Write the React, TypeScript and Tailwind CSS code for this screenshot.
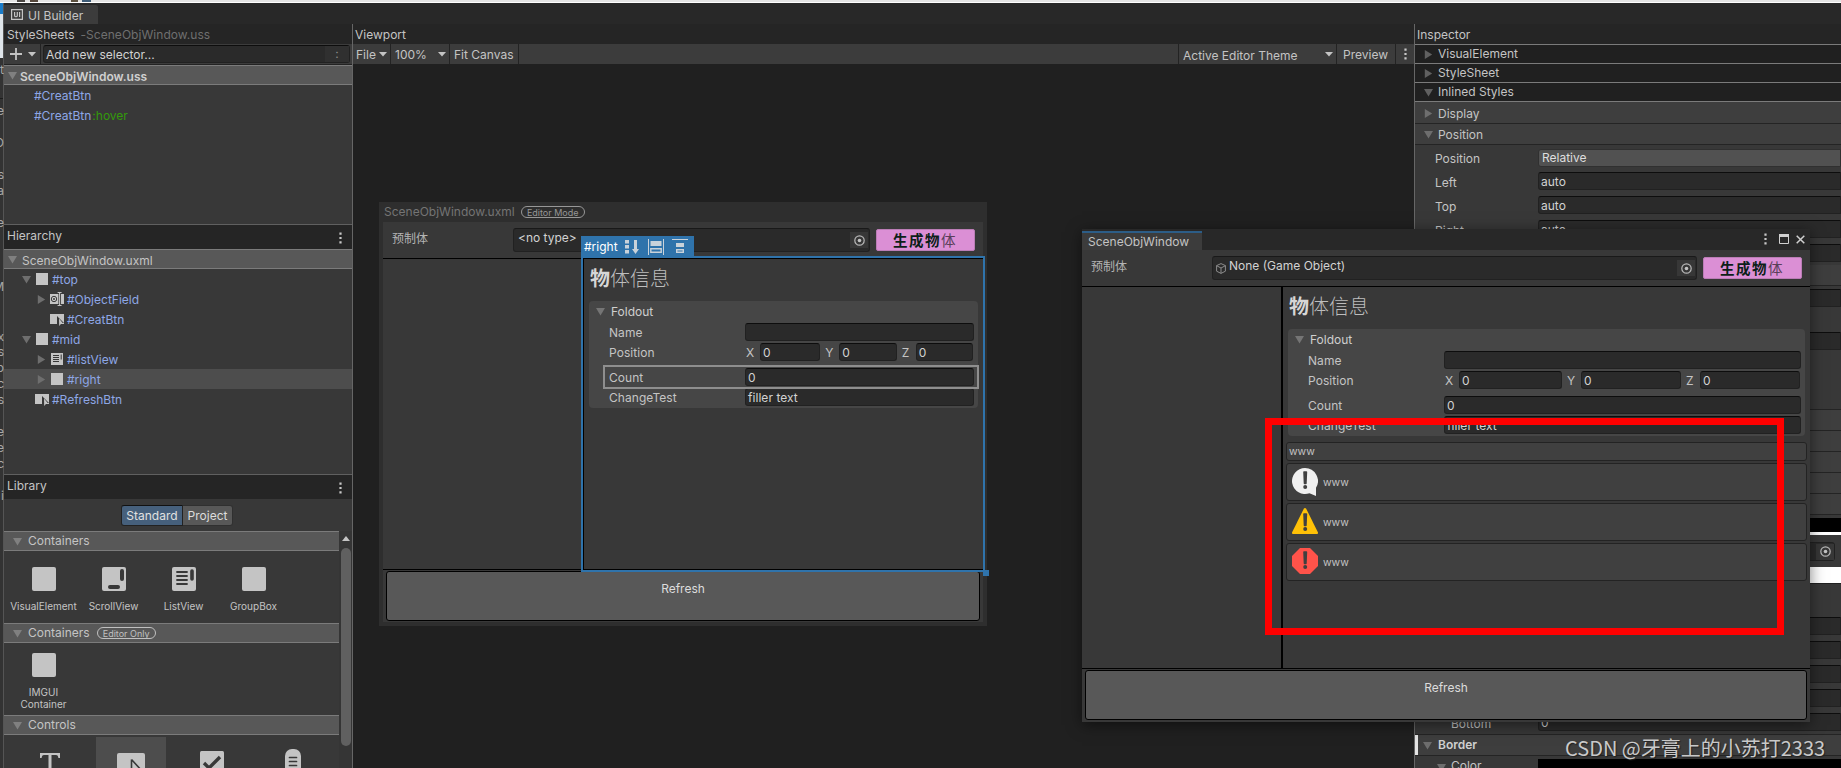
import React from "react";

const FIELD =
  "flex items-center h-[18px] bg-[#2a2a2a] border border-[#212121] border-t-[#0d0d0d] rounded-[3px] px-[2px] pt-px text-[#d2d2d2]";

function Tri({ open = false, color = "#6e6e6e" }: { open?: boolean; color?: string }) {
  return (
    <svg width="9" height="9" viewBox="0 0 9 9" className="shrink-0">
      <path d={open ? "M0 1h9L4.5 8.6z" : "M.8 0v9L8.200 4.5z"} fill={color} />
    </svg>
  );
}

function Caret() {
  return (
    <svg width="8" height="5" viewBox="0 0 8 5" className="shrink-0">
      <path d="M0 0h8L4 4.6z" fill="#c4c4c4" />
    </svg>
  );
}

function Kebab() {
  return (
    <svg width="3" height="12" viewBox="0 0 3 12" className="shrink-0">
      <path d="M.4 .5h2.2v2.2H.4zM.4 4.9h2.2v2.2H.4zM.4 9.3h2.2v2.2H.4z" fill="#c8c8c8" />
    </svg>
  );
}

function Target() {
  return (
    <span className="flex h-4 w-[18px] shrink-0 items-center justify-center bg-[#373737]">
      <svg width="11" height="11" viewBox="0 0 11 11">
        <circle cx="5.5" cy="5.5" r="4.7" fill="none" stroke="#b8b8b8" strokeWidth="1.2" />
        <circle cx="5.5" cy="5.5" r="1.8" fill="#c4c4c4" />
      </svg>
    </span>
  );
}

type NodeKind = "box" | "object" | "button" | "list";

function NodeIcon({ kind }: { kind: NodeKind }) {
  if (kind === "box")
    return (
      <svg width="14" height="14" viewBox="0 0 14 14">
        <path d="M1 1h12v12H1z" fill="#c4c4c4" />
      </svg>
    );
  if (kind === "list")
    return (
      <svg width="14" height="14" viewBox="0 0 14 14">
        <path d="M1 1h12v12H1z" fill="#c4c4c4" />
        <path d="M3 3.5h6M3 5.5h6M3 7.5h6M3 9.5h6M11.2 2.5v5" stroke="#383838" fill="none" />
      </svg>
    );
  if (kind === "button")
    return (
      <svg width="14" height="14" viewBox="0 0 14 14">
        <path d="M0 2h14v10H0z" fill="#c4c4c4" />
        <path d="M7 4l7 7h-3l-2 3.5H7z" fill="#383838" />
        <path d="M9 6.5l4.5 5.5h-2.6L9.2 14z" fill="#c4c4c4" />
      </svg>
    );
  return (
    <svg width="14" height="14" viewBox="0 0 14 14">
      <path d="M0 2h8.4v10H0zM11 2h3v10h-3z" fill="#c4c4c4" />
      <circle cx="4" cy="7" r="2.7" fill="none" stroke="#383838" />
      <circle cx="4" cy="7" r="1" fill="#383838" />
      <path d="M7.6 .5h4M7.6 13.5h4M9.6 .5v13" stroke="#c4c4c4" strokeWidth="1.1" fill="none" />
    </svg>
  );
}

function Badge({ children, className = "" }: { children: React.ReactNode; className?: string }) {
  return (
    <span className={"flex h-3 items-center justify-center rounded-full border text-[9px] leading-none " + className}>
      {children}
    </span>
  );
}

function PaneHeader({ title }: { title: string }) {
  return (
    <div className="flex h-[25px] shrink-0 justify-between border-t border-[#606060] bg-[#252525] pl-[3px] pr-[10px]">
      <span className="leading-[21px]">{title}</span>
      <span className="mt-[7px]">
        <Kebab />
      </span>
    </div>
  );
}

const TREE: { depth: string; arrow?: "open" | "closed"; kind: NodeKind; name: string; active?: boolean }[] = [
  { depth: "pl-[18px]", arrow: "open", kind: "box", name: "#top" },
  { depth: "pl-[33px]", arrow: "closed", kind: "object", name: "#ObjectField" },
  { depth: "pl-[33px]", kind: "button", name: "#CreatBtn" },
  { depth: "pl-[18px]", arrow: "open", kind: "box", name: "#mid" },
  { depth: "pl-[33px]", arrow: "closed", kind: "list", name: "#listView" },
  { depth: "pl-[33px]", arrow: "closed", kind: "box", name: "#right", active: true },
  { depth: "pl-[18px]", kind: "button", name: "#RefreshBtn" },
];

function LibHeader({ title, badge }: { title: string; badge?: string }) {
  return (
    <div className="flex h-5 shrink-0 items-center border-y border-[#7b7b7b] bg-[#585858] pl-[9px]">
      <Tri open color="#808080" />
      <span className="ml-[6px]">{title}</span>
      {badge && <Badge className="ml-[7px] w-[59px] border-[#c0c0c0] text-[#c0c0c0]">{badge}</Badge>}
    </div>
  );
}

function LibIcon({ kind }: { kind: "plain" | "scroll" | "list" }) {
  return (
    <svg width="24" height="24" viewBox="0 0 24 24">
      <rect width="24" height="24" rx="2" fill="#c4c4c4" />
      {kind === "scroll" && (
        <path d="M20 4v8M8 20h8" stroke="#383838" strokeWidth="4" strokeLinecap="round" fill="none" />
      )}
      {kind === "list" && (
        <>
          <path d="M5 5h10M5 9h10M5 13h10M5 17h10" stroke="#383838" strokeWidth="1.8" strokeLinecap="round" />
          <path d="M20 4v8" stroke="#383838" strokeWidth="3.6" strokeLinecap="round" />
        </>
      )}
    </svg>
  );
}

function LibItem({ kind, label }: { kind: "plain" | "scroll" | "list"; label: string }) {
  return (
    <div className="flex w-[70px] flex-col items-center text-center text-[10px] leading-3">
      <LibIcon kind={kind} />
      <span className="mr-px mt-[9px] whitespace-pre">{label}</span>
    </div>
  );
}

function LeftPanels() {
  return (
    <div className="flex w-[348px] shrink-0 flex-col bg-[#383838]">
      <div className="h-5 shrink-0 bg-[#252525] pl-[3px] leading-[21px]">
        StyleSheets<span className="ml-[6px] tracking-[0.04px] text-[#6f6f6f]">-SceneObjWindow.uss</span>
      </div>
      <div className="flex h-[21px] shrink-0 items-center border-b border-[#232323] bg-[#3c3c3c]">
        <div className="flex h-5 w-[37px] items-center gap-[6px] border-r border-[#232323] pl-[6px]">
          <svg width="12" height="12" viewBox="0 0 12 12">
            <path d="M6 0v12M0 6h12" stroke="#c4c4c4" strokeWidth="1.8" />
          </svg>
          <Caret />
        </div>
        <div className="ml-[2px] flex h-[18px] w-[307px] items-center justify-between rounded-[3px] border border-[#212121] border-t-[#0d0d0d] bg-[#2a2a2a] pl-[2px] text-[#d2d2d2]">
          <span className="pt-[2px]">Add new selector...</span>
          <span className="flex h-4 w-6 items-center justify-center bg-[#303030] text-[#8a8a8a]">:</span>
        </div>
      </div>
      <div className="flex h-5 shrink-0 items-center border-y border-[#7b7b7b] bg-[#585858] pl-1">
        <Tri open color="#808080" />
        <span className="ml-[3px] pt-[3px] font-semibold text-[#d0d0d0]">SceneObjWindow.uss</span>
      </div>
      <div className="h-5 pl-[30px] leading-[22px] text-[#8ea7e6]">#CreatBtn</div>
      <div className="h-5 pl-[30px] leading-[22px] text-[#8ea7e6]">
        #CreatBtn<span className="ml-px text-[#339a0a]">:hover</span>
      </div>
      <div className="h-[99px] shrink-0" />

      <PaneHeader title="Hierarchy" />
      <div className="flex h-5 shrink-0 items-center border-y border-[#7b7b7b] bg-[#585858] pl-1">
        <Tri open color="#808080" />
        <span className="ml-[5px] pt-[3px]">SceneObjWindow.uxml</span>
      </div>
      {TREE.map((n) => (
        <div
          key={n.name}
          className={"flex h-5 shrink-0 items-center text-[#8ea7e6] " + n.depth + (n.active ? " bg-[#4d4d4d]" : "")}
        >
          <span className="w-[13px]">{n.arrow && <Tri open={n.arrow === "open"} />}</span>
          <NodeIcon kind={n.kind} />
          <span className="ml-[3px] pt-px">{n.name}</span>
        </div>
      ))}
      <div className="h-[65px] shrink-0" />

      <PaneHeader title="Library" />
      <div className="flex h-8 shrink-0 justify-center pr-[2px] pt-[6px]">
        <div className="flex h-[21px] w-[62px] items-center justify-center rounded-l-[3px] border border-[#222] border-t-[#111] bg-[#46607c] pt-px text-[#e0e0e0]">
          Standard
        </div>
        <div className="flex h-[21px] w-[50px] items-center justify-center rounded-r-[3px] border border-l-0 border-[#303030] bg-[#585858] pt-px text-[#dcdcdc]">
          Project
        </div>
      </div>
      <div className="flex min-h-0 flex-1">
        <div className="flex w-[335px] flex-col overflow-hidden">
          <LibHeader title="Containers" />
          <div className="flex h-[72px] shrink-0 pl-[5px] pt-4">
            <LibItem kind="plain" label="VisualElement" />
            <LibItem kind="scroll" label="ScrollView" />
            <LibItem kind="list" label="ListView" />
            <LibItem kind="plain" label="GroupBox" />
          </div>
          <LibHeader title="Containers" badge="Editor Only" />
          <div className="flex h-[72px] shrink-0 pl-[5px] pt-[10px]">
            <LibItem kind="plain" label={"IMGUI\nContainer"} />
          </div>
          <LibHeader title="Controls" />
          <div className="flex h-[60px] shrink-0 pl-[11px] pt-[2px]">
            <div className="flex w-[70px] shrink-0 justify-center pt-4">
              <svg width="20" height="20" viewBox="0 0 20 20">
                <path d="M0 0h20v5h-1.600c-.3-2-.8-3-2.400-3H11.500v18h-3V2H4C2.400 2 1.900 3 1.600 5H0z" fill="#c4c4c4" />
              </svg>
            </div>
            <div className="ml-[11px] flex h-full w-[70px] shrink-0 justify-center bg-[#4d4d4d] pt-4">
              <svg width="28" height="24" viewBox="0 0 28 24">
                <rect width="28" height="24" rx="2" fill="#c4c4c4" />
                <path d="M14.500 6.500v14M14.500 6.500l11 12" stroke="#383838" strokeWidth="1.600" fill="none" />
              </svg>
            </div>
            <div className="flex w-[92px] shrink-0 justify-center pt-[14px]">
              <svg width="24" height="24" viewBox="0 0 24 24">
                <rect width="24" height="24" rx="1.500" fill="#c4c4c4" />
                <path d="M4 12l5 5L20 6" stroke="#383838" strokeWidth="3.400" fill="none" />
              </svg>
            </div>
            <div className="flex w-[70px] shrink-0 justify-center pt-3">
              <svg width="16" height="30" viewBox="0 0 16 30">
                <rect width="16" height="30" rx="7" fill="#c4c4c4" />
                <path d="M4.500 8.500h7M4.500 12.500h7M4.500 16.500h7" stroke="#383838" strokeWidth="1.700" strokeLinecap="round" />
              </svg>
            </div>
          </div>
        </div>
        <div className="flex w-[13px] flex-col items-center bg-[#353535] pl-px">
          <svg width="8" height="5" viewBox="0 0 8 5" className="mt-[5px] shrink-0">
            <path d="M0 5h8L4 0z" fill="#c4c4c4" />
          </svg>
          <div className="mt-[7px] h-[198px] w-[10px] rounded-full bg-[#606060]" />
        </div>
      </div>
    </div>
  );
}

function FormRow({ label, value }: { label: string; value: string }) {
  return (
    <div className="flex h-5 items-center">
      <span className="w-[136px] shrink-0 pt-[2px]">{label}</span>
      <div className={FIELD + " flex-1"}>{value}</div>
    </div>
  );
}

function InfoForm() {
  return (
    <div className="ml-[5px] mr-[5px] flex h-[107px] flex-col rounded-[4px] bg-[#464646]">
      <div className="flex h-[21px] items-center pl-[7px] text-[#cfcfcf]">
        <Tri open color="#757575" />
        <span className="ml-[6px]">Foldout</span>
      </div>
      <div className="flex flex-col pl-5 pr-1 tracking-[0.05px]">
        <FormRow label="Name" value="" />
        <div className="flex h-5 items-center pr-px">
          <span className="w-[137px] shrink-0 pt-[2px]">Position</span>
          <span className="w-[14px] shrink-0 pt-[2px]">X</span>
          <div className={FIELD + " grow basis-[9px]"}>0</div>
          <span className="ml-[5px] w-[14px] shrink-0 pt-[2px]">Y</span>
          <div className={FIELD + " grow basis-[6px]"}>0</div>
          <span className="ml-[5px] w-[14px] shrink-0 pt-[2px]">Z</span>
          <div className={FIELD + " grow basis-[6px]"}>0</div>
        </div>
        <div className="h-[5px]" />
        <FormRow label="Count" value="0" />
        <FormRow label="ChangeTest" value="filler text" />
      </div>
    </div>
  );
}

function InfoTitle() {
  return (
    <div className="flex h-[42px] pl-[6px] pt-[5px] text-[20px] leading-[30px] text-[#d6d6d6]">
      <span className="font-bold">物</span>
      <span className="font-light text-[#bdbdbd]">体信息</span>
    </div>
  );
}

function TopBar({ children }: { children: React.ReactNode }) {
  return (
    <div className="flex h-full items-start text-[#b4b4b4]">
      <span className="w-[121px] shrink-0 leading-[22px]">预制体</span>
      <div className="flex h-6 min-w-0 flex-1 items-center justify-between rounded-[3px] border border-[#212121] border-t-[#191919] bg-[#2a2a2a] pr-px text-[#d2d2d2]">
        <span className="flex items-center pb-1">{children}</span>
        <Target />
      </div>
      <div className="ml-[6px] mt-px flex h-[22px] w-[99px] shrink-0 items-center justify-center rounded-[2px] border border-[#bb7db6] bg-[#db8fd5] pr-px pt-px text-[14.500px] tracking-[1.500px] text-[#0c1f18]">
        <span className="font-bold">生成物</span>
        <span className="text-[#5a3f5a]">体</span>
      </div>
    </div>
  );
}

function RefreshButton() {
  return (
    <div className="flex h-[50px] justify-center rounded-[3px] border border-black bg-[#585858] pt-[7px] leading-[20px] text-[#dcdcdc]">
      Refresh
    </div>
  );
}

function CanvasDoc() {
  return (
    <div className="relative ml-[26px] mt-[138px] h-[424px] w-[608px] bg-[#2e2e2e]">
      <div className="flex h-5 items-center pl-[5px] text-[#747474]">
        <span>SceneObjWindow.uxml</span>
        <Badge className="ml-[6px] w-[64px] border-[#979797] text-[#979797]">Editor Mode</Badge>
      </div>
      <div className="mx-1 flex h-[400px] flex-col bg-[#383838]">
        <div className="h-9 pl-[9px] pr-[8px] pt-[6px]">
          <TopBar>
            <span className="pl-[4px]">&lt;no type&gt;</span>
          </TopBar>
        </div>
        <div className="flex h-[312px] border-y border-black">
          <div className="w-[201px] shrink-0 border-r border-black" />
          <div className="min-w-0 flex-1">
            <InfoTitle />
            <InfoForm />
          </div>
        </div>
        <div className="pl-[3px] pr-[3px] pt-px">
          <RefreshButton />
        </div>
      </div>

      <div className="absolute left-[202px] top-[54px] h-[316px] w-[404px] border-2 border-[#2f73ab]" />
      <div className="absolute left-[604px] top-[368px] size-[6px] bg-[#2f73ab]" />
      <div className="absolute left-[224px] top-[163px] h-[24px] w-[376px] border-2 border-[#8e8e8e]" />
      <div className="absolute left-[202px] top-[34px] flex h-[21px] w-[113px] items-center bg-[#2f73ab] pl-[3px] text-white">
        <span className="w-[41px] shrink-0">#right</span>
        <svg width="14" height="14" viewBox="0 0 14 14" className="shrink-0">
          <path d="M0 0h4v3.500H0zM0 5h4v3.500H0zM0 10h4v3.500H0zM9 0h3v9h2l-3.500 5L7 9h2z" fill="#c9d2da" />
        </svg>
        <svg width="16" height="16" viewBox="0 0 16 16" className="ml-[9px] shrink-0">
          <path d="M0 0h1v16H0zM15 0h1v16h-1zM2.500 2h11v5h-11z" fill="#c9d2da" />
          <path d="M2.800 9.700h10.400v3.600H2.800z" fill="none" stroke="#c9d2da" strokeWidth="1.400" />
        </svg>
        <svg width="16" height="16" viewBox="0 0 16 16" className="ml-[8px] shrink-0">
          <path d="M0 0h16v1H0zM4 4h8v4H4z" fill="#c9d2da" />
          <path d="M4.700 10.700h6.600v2.600H4.700z" fill="none" stroke="#c9d2da" strokeWidth="1.400" />
        </svg>
      </div>
    </div>
  );
}

function Viewport() {
  return (
    <div className="flex w-[1062px] shrink-0 flex-col border-l border-[#666] bg-[#202020]">
      <div className="h-5 shrink-0 bg-[#252525] pl-[2px] leading-[21px]">Viewport</div>
      <div className="flex h-5 shrink-0 items-center justify-between bg-[#3c3c3c]">
        <div className="flex h-full">
          <div className="flex w-[38px] items-center gap-[3px] border-r border-[#232323] pl-[3px]">
            <span className="pt-px">File</span> <Caret />
          </div>
          <div className="flex w-[59px] items-center justify-between border-r border-[#232323] pl-1 pr-[3px]">
            <span className="pt-px">100%</span> <Caret />
          </div>
          <div className="flex w-[69px] items-center border-r border-[#232323] pl-[4px] pt-px">Fit Canvas</div>
        </div>
        <div className="flex h-full">
          <div className="flex w-[159px] items-center justify-between border-x border-[#232323] pl-1 pr-[3px]">
            <span className="pt-[3px]">Active Editor Theme</span> <Caret />
          </div>
          <div className="flex w-[59px] items-center border-r border-[#232323] pl-[6px] pt-px">Preview</div>
          <div className="flex w-[18px] items-center justify-center">
            <Kebab />
          </div>
        </div>
      </div>
      <CanvasDoc />
    </div>
  );
}

function InspFold({ label, open }: { label: string; open?: boolean }) {
  return (
    <div className="flex h-[19px] shrink-0 items-center border-t border-[#7b7b7b] bg-[#202020] pl-[9px]">
      <Tri open={open} color="#606060" />
      <span className="ml-[5px]">{label}</span>
    </div>
  );
}

function InspGroup({ label, open }: { label?: string; open?: boolean }) {
  return (
    <div className="flex h-[21px] shrink-0 items-center border-b border-[#242424] bg-[#3e3e3e] pl-[9px]">
      {label && <Tri open={open} />}
      <span className="ml-[5px] pt-px">{label}</span>
    </div>
  );
}

function InspRow({ label, value, indent }: { label?: string; value?: string; indent?: boolean }) {
  return (
    <div className="flex h-6 shrink-0 items-center">
      <span className={indent ? "w-[123px] shrink-0 pl-9 pt-[3px]" : "w-[123px] shrink-0 pl-5 pt-[3px]"}>{label}</span>
      <div className={FIELD + " flex-1 rounded-r-none"}>{value}</div>
    </div>
  );
}

function Inspector() {
  return (
    <div className="flex min-w-0 flex-1 flex-col overflow-hidden border-l border-[#666] bg-[#383838]">
      <div className="h-5 shrink-0 bg-[#252525] pl-[2px] leading-[21px]">Inspector</div>
      <InspFold label="VisualElement" />
      <InspFold label="StyleSheet" />
      <InspFold label="Inlined Styles" open />
      <div className="h-px shrink-0 bg-[#7b7b7b]" />
      <div className="h-px shrink-0 bg-[#3e3e3e]" />
      <InspGroup label="Display" />
      <InspGroup label="Position" open />
      <div className="flex h-6 shrink-0 items-center">
        <span className="w-[123px] shrink-0 pl-5 pt-[3px]">Position</span>
        <div className="mt-px flex h-[18px] flex-1 items-center rounded-l-[3px] border border-[#303030] bg-[#515151] pl-[3px] text-[#dedede]">
          Relative
        </div>
      </div>
      <InspRow label="Left" value="auto" />
      <InspRow label="Top" value="auto" />
      <InspRow label="Right" value="auto" />
      <InspRow label="Bottom" value="auto" />
      <InspGroup />
      <InspRow />
      <div className="h-[19px] shrink-0" />
      <InspRow />
      <div className="h-[57px] shrink-0 border-b border-[#242424]" />
      <InspGroup />
      <InspGroup />
      <InspGroup />
      <InspGroup />
      <InspGroup />
      <div className="ml-[123px] mt-[3px] h-[14px] shrink-0 bg-black" />
      <div className="ml-[123px] h-[3px] shrink-0 bg-white" />
      <div className="ml-[123px] mr-[6px] mt-[7px] flex h-[19px] shrink-0 items-center justify-end rounded-[3px] border border-[#212121] bg-[#2a2a2a]">
        <Target />
      </div>
      <div className="ml-[123px] mt-[6px] h-[17px] shrink-0 border-b border-[#212121] bg-white" />
      <div className="h-[30px] shrink-0" />
      <InspRow indent />
      <InspRow indent />
      <InspRow indent />
      <InspRow indent />
      <InspRow label="Bottom" value="0" indent />
      <div className="flex h-[22px] shrink-0 items-center border-y border-[#242424] bg-[#3e3e3e]">
        <div className="h-full w-[3px] bg-[#e4e4e4]" />
        <span className="ml-[5px] flex items-center font-semibold text-[#d0d0d0]">
          <Tri open />
          <span className="ml-[6px]">Border</span>
        </span>
      </div>
      <div className="flex h-[22px] shrink-0 items-start pl-[22px]">
        <span className="mt-[7px]">
          <Tri open />
        </span>
        <span className="ml-[5px] w-[87px] leading-[20px]">Color</span>
        <div className="mt-[3px] h-[19px] flex-1 bg-black" />
      </div>
    </div>
  );
}

const BANG = "M12 4h2.400l-.5 11.500h-1.400z";

function HelpIcon({ kind }: { kind: "info" | "warn" | "error" }) {
  return (
    <svg width="26" height="28" viewBox="0 0 26 28" className="shrink-0">
      {kind === "info" && (
        <path d="M13 0a13 13 0 0 1 11 19.800V28l-6.500-2.800A13 13 0 1 1 13 0z" fill="#f0f0f0" />
      )}
      {kind === "warn" && (
        <path d="M11.800 .8c.6-1 1.800-1 2.400 0L26 24.500c0 1-.4 1.500-1.200 1.500H1.200C.4 26 0 25.500 0 24.500z" fill="#ffc107" />
      )}
      {kind === "error" && <path d="M8 0h10l8 8v10l-8 8H8l-8-8V8z" fill="#ff534a" />}
      <g transform={kind === "warn" ? "translate(0 2)" : undefined}>
        <path d={BANG} fill="#404040" stroke="#404040" strokeWidth="1.600" strokeLinejoin="round" />
        <circle cx="13.200" cy="19" r="2" fill="#404040" />
      </g>
    </svg>
  );
}

function HelpBox({ kind }: { kind: "info" | "warn" | "error" }) {
  return (
    <div className="mt-[2px] flex h-[38px] gap-[5px] rounded-[3px] border border-[#232323] bg-[#404040] pl-[5px] pt-1 text-[10.500px]">
      <HelpIcon kind={kind} />
      <span className="leading-[30px]">www</span>
    </div>
  );
}

function FloatingWindow() {
  return (
    <div className="absolute left-[1082px] top-[229px] flex h-[493px] w-[728px] flex-col bg-[#383838] shadow-[0_3px_14px_rgba(0,0,0,0.5)]">
      <div className="flex h-[21px] shrink-0 items-end justify-between bg-[#282828] pr-[5px]">
        <div className="flex h-[19px] w-[120px] items-center border-t-2 border-[#2c5d87] bg-[#3c3c3c] pl-[6px]">
          <span>SceneObjWindow</span>
        </div>
        <div className="mb-[5px] flex items-center">
          <Kebab />
          <svg width="10" height="10" viewBox="0 0 10 10" className="ml-[12px]">
            <path d="M.5 .5h9v9h-9z" fill="none" stroke="#d0d0d0" />
            <path d="M0 0h10v3H0z" fill="#d0d0d0" />
          </svg>
          <svg width="9" height="9" viewBox="0 0 9 9" className="ml-[7px]">
            <path d="M.7 .7l7.600 7.600M8.300 .7L.7 8.300" stroke="#d0d0d0" strokeWidth="1.500" />
          </svg>
        </div>
      </div>
      <div className="h-9 shrink-0 pl-[9px] pr-[8px] pt-[6px]">
        <TopBar>
          <svg width="10" height="11" viewBox="0 0 10 11" className="ml-[3px] mt-[5px]">
            <path d="M5 .6l4.400 2v5.600L5 10.400.6 8.200V2.600zM.6 2.700L5 5l4.400-2.300M5 5v5.400" fill="none" stroke="#8c8c8c" />
          </svg>
          <span className="ml-[3px] pb-px">None (Game Object)</span>
        </TopBar>
      </div>
      <div className="flex h-[383px] shrink-0 border-y border-black">
        <div className="w-[201px] shrink-0 border-r-2 border-black" />
        <div className="min-w-0 flex-1">
          <InfoTitle />
          <InfoForm />
          <div className="ml-[3px] mr-[3px] mt-[6px]">
            <div className="h-[19px] rounded-[3px] border border-[#232323] bg-[#404040] pl-[2px] text-[10.500px] leading-[17px]">
              www
            </div>
            <HelpBox kind="info" />
            <HelpBox kind="warn" />
            <HelpBox kind="error" />
          </div>
        </div>
      </div>
      <div className="pl-[3px] pr-[3px] pt-px">
        <RefreshButton />
      </div>
    </div>
  );
}

const EDGE: { top: string; text: string }[] = [
  { top: "top-[62px]", text: "t" },
  { top: "top-[103px]", text: "e" },
  { top: "top-[135px]", text: "O" },
  { top: "top-[167px]", text: "s" },
  { top: "top-[183px]", text: "a" },
  { top: "top-[215px]", text: "e" },
  { top: "top-[279px]", text: "M" },
  { top: "top-[329px]", text: "x" },
  { top: "top-[344px]", text: "s" },
  { top: "top-[360px]", text: "o" },
  { top: "top-[376px]", text: "c" },
  { top: "top-[392px]", text: "s" },
  { top: "top-[424px]", text: "e" },
  { top: "top-[440px]", text: "e" },
  { top: "top-[456px]", text: "c" },
  { top: "top-[488px]", text: "i" },
];

export default function App() {
  return (
    <div className="relative flex h-[768px] w-[1841px] flex-col overflow-hidden bg-[#383838] font-['Inter','Noto_Sans_CJK_SC',sans-serif] text-[12px] leading-[16px] whitespace-nowrap text-[#c4c4c4]">
      <div className="flex h-[3px] shrink-0 items-start border-b border-white bg-[#e4e4e4]">
        <div className="ml-[17px] h-[2px] w-[8px] bg-[#4b4744]" />
        <div className="ml-[5px] h-[2px] w-[8px] bg-[#56483d]" />
        <div className="ml-[33px] h-[2px] w-[7px] bg-[#5c5140]" />
        <div className="ml-[4px] h-[2px] w-[9px] bg-[#3f5d78]" />
      </div>
      <div className="flex min-h-0 flex-1">
        <div className="w-1 shrink-0 border-r border-[#555] bg-[#333]">
          <div className="h-[11px] bg-[#1b7cc8]" />
          <div className="h-[44px] bg-[#dfe5ea]" />
          <div className="h-[41px] border-b border-[#1c1c1c]" />
        </div>
        <div className="flex min-w-0 flex-1 flex-col">
          <div className="flex h-[21px] shrink-0 items-end bg-[#282828]">
            <div className="flex h-[19px] w-[94px] items-center gap-[5px] rounded-tr-[2px] bg-[#3c3c3c] pl-[7px]">
              <svg width="12" height="11" viewBox="0 0 12 11">
                <path d="M.6 .6h10.800v9.800H.6zM3.600 3v3.400c0 1.800 2.700 1.800 2.700 0V3M8.600 3v5" fill="none" stroke="#c4c4c4" strokeWidth="1.200" />
              </svg>
              <span className="pt-[2px]">UI Builder</span>
            </div>
          </div>
          <div className="flex min-h-0 flex-1">
            <LeftPanels />
            <Viewport />
            <Inspector />
          </div>
        </div>
      </div>

      <div className="absolute left-0 top-0 h-full w-[4px] overflow-hidden">
        {EDGE.map((e) => (
          <span key={e.top} className={"absolute right-0 text-[#a8a8a8] " + e.top}>
            {e.text}
          </span>
        ))}
      </div>

      <FloatingWindow />
      <div className="absolute left-[1265px] top-[418px] h-[217px] w-[519px] border-[7px] border-[#ff0000]" />
      <div className="absolute left-[1565px] top-[733px] font-['Noto_Sans_CJK_SC',sans-serif] text-[20px] leading-[30px] text-[#c9c9c9] [text-shadow:1px_1px_1px_#222]">
        CSDN @牙膏上的小苏打2333
      </div>
    </div>
  );
}
